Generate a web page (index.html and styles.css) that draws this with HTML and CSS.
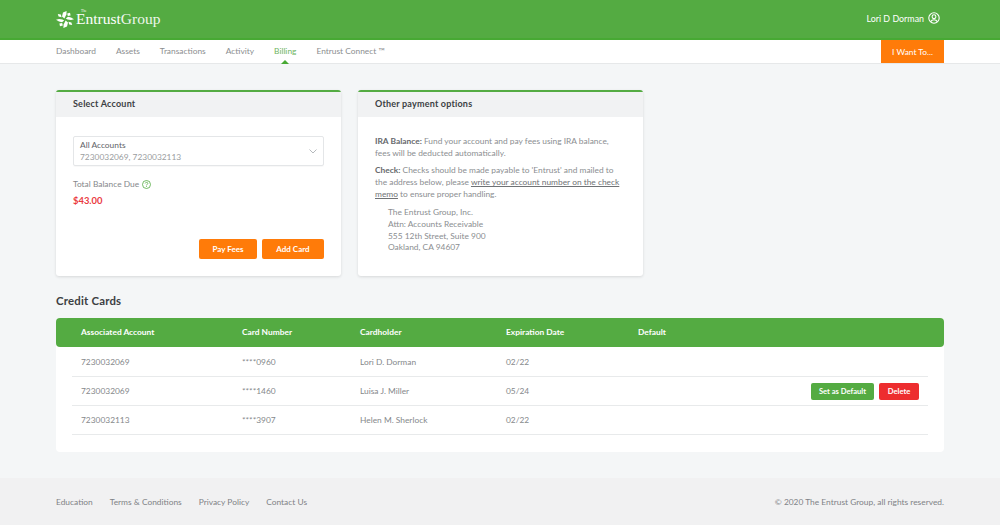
FILE: index.html
```html
<!DOCTYPE html>
<html lang="en">
<head>
<meta charset="utf-8">
<title>Billing</title>
<link rel="stylesheet" href="styles.css">
</head>
<body>
<header class="topbar">
  <div class="logo">
    <svg class="logo-mark" width="18" height="17" viewBox="0 0 18 17"><g fill="#fff"><path d="M8.4 7.6 6 5.4 7 1.6 10.6 0 10.4 3.4Z"/><path d="M9.6 9.4 12 11.6 11 15.4 7.4 17 7.6 13.6Z"/><path d="M9.8 7.6 12 5.8 15 6.6 18 8.2 15 9 11.6 8.4Z"/><path d="M8.2 9.4 6 11.2 3 10.4 0 8.8 3 8 6.4 8.6Z"/><path d="M11.2 2.6 14 1.8 14.6 4.6 11.8 5Z"/><path d="M6.8 14.4 4 15.2 3.4 12.4 6.2 12Z"/><path d="M1.8 3 4.8 3.4 5.6 6.2 2.6 5.6Z"/><path d="M16.2 14 13.2 13.6 12.4 10.8 15.4 11.4Z"/></g></svg>
    <span class="logo-text"><span class="logo-the">The</span><span class="logo-bold">Entrust</span>Group</span>
  </div>
  <div class="user">
    <span>Lori D Dorman</span>
    <svg width="12" height="12" viewBox="0 0 12 12" fill="none" stroke="#fff" stroke-width="1.1"><circle cx="6" cy="6" r="5.2"/><circle cx="6" cy="4.7" r="1.9"/><path d="M2.6 9.8C3.4 8.3 4.6 7.8 6 7.8s2.6.5 3.4 2"/></svg>
  </div>
</header>
<nav class="navbar">
  <ul class="nav-links">
    <li>Dashboard</li>
    <li>Assets</li>
    <li>Transactions</li>
    <li>Activity</li>
    <li class="active">Billing</li>
    <li>Entrust Connect ™</li>
  </ul>
  <div class="want">I Want To...</div>
</nav>
<main class="content">
  <div class="cards">
    <section class="card">
      <h2 class="card-head">Select Account</h2>
      <div class="card-body account-body">
        <div class="select">
          <div>
            <div class="select-label">All Accounts</div>
            <div class="select-value">7230032069, 7230032113</div>
          </div>
          <svg width="8" height="5" viewBox="0 0 8 5" fill="none" stroke="#b5b9bc" stroke-width="1"><path d="M.5.5 4 4 7.5.5"/></svg>
        </div>
        <div class="balance-label">Total Balance Due
          <svg width="9" height="9" viewBox="0 0 9 9" fill="none" stroke="#52a93f" stroke-width=".8"><circle cx="4.5" cy="4.5" r="4"/><path d="M3.2 3.4C3.4 2 5.8 2 5.8 3.4 5.8 4.3 4.5 4.3 4.5 5.4M4.5 6.2v.8"/></svg>
        </div>
        <div class="balance">$43.00</div>
        <div class="actions">
          <button class="btn btn-orange btn-pay">Pay Fees</button>
          <button class="btn btn-orange btn-add">Add Card</button>
        </div>
      </div>
    </section>
    <section class="card">
      <h2 class="card-head">Other payment options</h2>
      <div class="card-body options-body">
        <p class="para"><strong>IRA Balance:</strong> Fund your account and pay fees using IRA balance,<br>fees will be deducted automatically.</p>
        <p class="para"><strong>Check:</strong> Checks should be made payable to 'Entrust' and mailed to<br>the address below, please <u>write your account number on the check<br>memo</u> to ensure proper handling.</p>
        <address class="addr">The Entrust Group, Inc.<br>Attn: Accounts Receivable<br>555 12th Street, Suite 900<br>Oakland, CA 94607</address>
      </div>
    </section>
  </div>
  <h3 class="section-title">Credit Cards</h3>
  <section class="table">
    <div class="row row-head">
      <div>Associated Account</div><div>Card Number</div><div>Cardholder</div><div>Expiration Date</div><div>Default</div><div></div>
    </div>
    <div class="rows">
      <div class="row">
        <div>7230032069</div><div>****0960</div><div>Lori D. Dorman</div><div>02/22</div><div></div><div></div>
      </div>
      <div class="row">
        <div>7230032069</div><div>****1460</div><div>Luisa J. Miller</div><div>05/24</div><div></div>
        <div class="row-actions"><button class="btn-sm btn-green">Set as Default</button><button class="btn-sm btn-red">Delete</button></div>
      </div>
      <div class="row">
        <div>7230032113</div><div>****3907</div><div>Helen M. Sherlock</div><div>02/22</div><div></div><div></div>
      </div>
    </div>
  </section>
</main>
<footer class="footer">
  <ul class="foot-links">
    <li>Education</li>
    <li>Terms &amp; Conditions</li>
    <li>Privacy Policy</li>
    <li>Contact Us</li>
  </ul>
  <div class="copy">© 2020 The Entrust Group, all rights reserved.</div>
</footer>
</body>
</html>
```
FILE: styles.css
```css
* { box-sizing: border-box; }
html, body { margin: 0; padding: 0; }
body {
  width: 1000px;
  height: 525px;
  overflow: hidden;
  background: #f4f6f7;
  font-family: Lato, "Open Sans", sans-serif;
  font-size: 8.4px;
  color: #7d8084;
}
ul { list-style: none; margin: 0; padding: 0; }

.topbar {
  height: 40px;
  background: #54ab42;
  border-bottom: 2px solid #47a933;
  padding: 0 56px;
  display: flex;
  justify-content: space-between;
  align-items: center;
  color: #fff;
}
.logo { display: flex; align-items: center; gap: 2px; }
.logo-text { position: relative; font-family: "Liberation Serif", serif; font-size: 15.5px; color: #eef6ec; }
.logo-the { position: absolute; left: 5px; top: -1px; font-size: 3.5px; line-height: 4px; color: #fff; }
.logo-bold { color: #fff; }
.user { display: flex; align-items: center; gap: 4px; font-size: 8.9px; margin: -2px 4px 0 0; }

.navbar {
  height: 24px;
  background: #fff;
  border-bottom: 1px solid #e6e8e9;
  padding: 0 56px;
  display: flex;
  justify-content: space-between;
}
.nav-links { display: flex; gap: 20px; align-items: center; color: #8b8e90; height: 21px; }
.nav-links li { position: relative; }
.active { color: #6fb45f; }
.active::after {
  content: "";
  position: absolute;
  left: 50%;
  bottom: -8px;
  margin-left: -4px;
  border: 4px solid transparent;
  border-top: 0;
  border-bottom-color: #47a933;
}
.want {
  width: 63px;
  height: 23px;
  background: #ff7b09;
  color: #fff;
  display: flex;
  align-items: center;
  justify-content: center;
}

.content { padding: 26px 56px 0; height: 414px; }
.cards { display: flex; gap: 17px; }
.card {
  width: 285px;
  height: 186px;
  background: #fff;
  border-top: 2px solid #54ab42;
  border-radius: 3px;
  box-shadow: 0 1px 3px rgba(0, 0, 0, .12);
}
.card-head {
  margin: 0;
  height: 25px;
  padding: 0 17px 2px;
  background: #f1f2f3;
  font-size: 9px;
  font-weight: 700;
  letter-spacing: .2px;
  color: #3c3f43;
  display: flex;
  align-items: center;
}
.card-body { padding: 19px 17px 0; }
.select {
  height: 30px;
  border: 1px solid #e4e6e8;
  border-radius: 2px;
  padding: 3px 6px;
  display: flex;
  justify-content: space-between;
  align-items: center;
  box-shadow: 0 1px 1px rgba(0, 0, 0, .03);
  line-height: 12px;
}
.select-label { color: #5f6367; }
.select-value { color: #9a9da0; }
.balance-label { margin-top: 12px; display: flex; align-items: center; gap: 3px; line-height: 12px; color: #85888b; }
.balance { margin-top: 4px; color: #ea3a3f; font-size: 9.4px; font-weight: 700; line-height: 14px; }
.actions { display: flex; justify-content: flex-end; gap: 5px; margin-top: 31px; }
.btn {
  height: 20px;
  border: 0;
  border-radius: 2px;
  color: #fff;
  font: 700 8px Lato, sans-serif;
  padding: 0;
}
.btn-orange { background: #ff7b09; }
.btn-pay { width: 58px; }
.btn-add { width: 62px; }

.options-body { padding-top: 18px; }
.para { margin: 0 0 5px; line-height: 12px; color: #8b8e91; white-space: nowrap; }
.para strong { color: #65686b; font-weight: 700; }
.para u { color: #6f7275; }
.addr { font-style: normal; line-height: 11.8px; margin: 7px 0 0 13px; color: #8b8e91; }

.section-title {
  margin: 17px 0 0;
  height: 25px;
  font-size: 11.4px;
  font-weight: 700;
  letter-spacing: .2px;
  color: #3c3f43;
  line-height: 16px;
}
.table { background: #fff; height: 134px; border-radius: 4px; }
.row {
  display: grid;
  grid-template-columns: 161px 118px 146px 132px 1fr 120px;
  align-items: center;
  height: 29px;
  padding: 0 25px;
  color: #85888b;
}
.row-head {
  background: #54ab42;
  border-radius: 4px;
  color: #fff;
  font-weight: 700;
  padding-bottom: 2px;
}
.rows { padding: 1px 16px 0; }
.rows .row { padding: 0 9px; border-bottom: 1px solid #e8eaeb; }
.row-actions { display: flex; gap: 5px; justify-content: flex-end; }
.btn-sm {
  height: 17px;
  border: 0;
  border-radius: 2px;
  color: #fff;
  font: 700 7.6px Lato, sans-serif;
  padding: 0;
  flex: none;
}
.btn-green { background: #54ab42; width: 63px; }
.btn-red { background: #ed2d2f; width: 40px; }

.footer {
  height: 47px;
  background: #f1f1f2;
  padding: 0 56px;
  display: flex;
  justify-content: space-between;
  align-items: center;
  color: #7f8286;
}
.foot-links { display: flex; gap: 17px; }
```
